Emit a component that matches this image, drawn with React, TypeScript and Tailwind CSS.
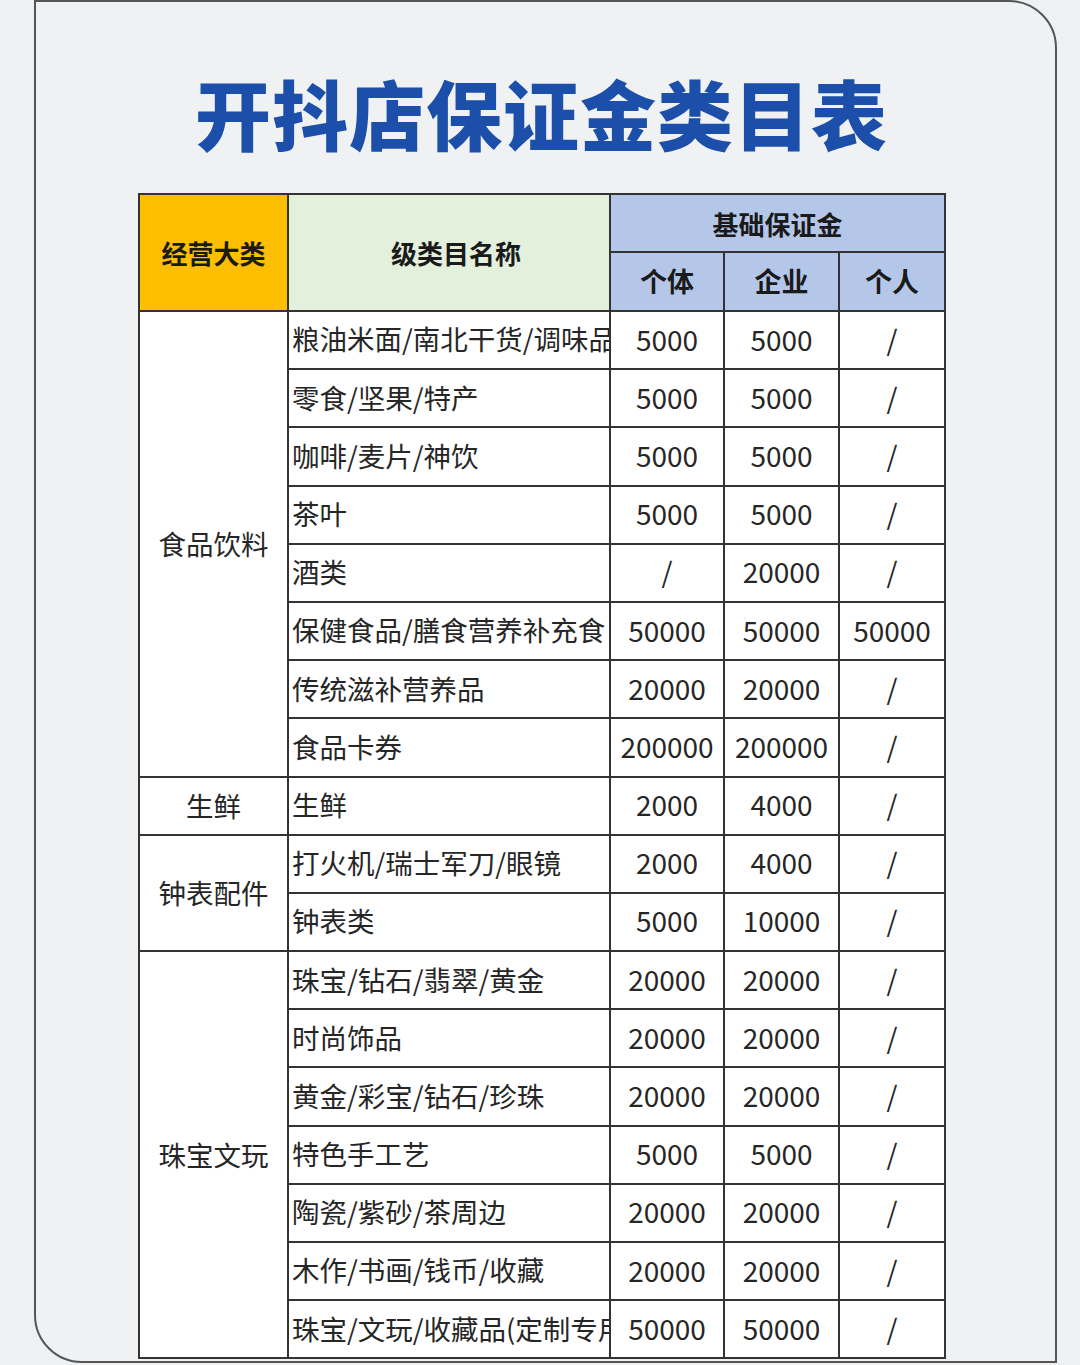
import React from "react";

type Row = { name: string; a: string; b: string; c: string };
type Group = { cat: string; rows: Row[] };

const groups: Group[] = [
  {
    cat: "食品饮料",
    rows: [
      { name: "粮油米面/南北干货/调味品", a: "5000", b: "5000", c: "/" },
      { name: "零食/坚果/特产", a: "5000", b: "5000", c: "/" },
      { name: "咖啡/麦片/神饮", a: "5000", b: "5000", c: "/" },
      { name: "茶叶", a: "5000", b: "5000", c: "/" },
      { name: "酒类", a: "/", b: "20000", c: "/" },
      { name: "保健食品/膳食营养补充食", a: "50000", b: "50000", c: "50000" },
      { name: "传统滋补营养品", a: "20000", b: "20000", c: "/" },
      { name: "食品卡券", a: "200000", b: "200000", c: "/" },
    ],
  },
  {
    cat: "生鲜",
    rows: [{ name: "生鲜", a: "2000", b: "4000", c: "/" }],
  },
  {
    cat: "钟表配件",
    rows: [
      { name: "打火机/瑞士军刀/眼镜", a: "2000", b: "4000", c: "/" },
      { name: "钟表类", a: "5000", b: "10000", c: "/" },
    ],
  },
  {
    cat: "珠宝文玩",
    rows: [
      { name: "珠宝/钻石/翡翠/黄金", a: "20000", b: "20000", c: "/" },
      { name: "时尚饰品", a: "20000", b: "20000", c: "/" },
      { name: "黄金/彩宝/钻石/珍珠", a: "20000", b: "20000", c: "/" },
      { name: "特色手工艺", a: "5000", b: "5000", c: "/" },
      { name: "陶瓷/紫砂/茶周边", a: "20000", b: "20000", c: "/" },
      { name: "木作/书画/钱币/收藏", a: "20000", b: "20000", c: "/" },
      { name: "珠宝/文玩/收藏品(定制专用)", a: "50000", b: "50000", c: "/" },
    ],
  },
];

const cell = "border-2 border-[#333333] p-0";
const num = `${cell} text-center text-[28px] pb-[3px]`;

export default function App() {
  return (
    <div
      className="w-[1080px] h-[1365px] bg-[#eef0f2] overflow-hidden pl-[34px]"
      style={{ fontFamily: '"Noto Sans CJK SC", "Noto Sans", sans-serif' }}
    >
      <div className="w-[1023px] h-[1363px] border-2 border-[#555555] rounded-tr-[48px] rounded-bl-[48px] bg-[#eff1f3] overflow-hidden">
        <div className="pt-[72px] h-[150px] flex justify-center pr-[8px]">
          <h1 className="text-[76px] leading-none font-black text-[#1b4fa9] tracking-[1px]">
            开抖店保证金类目表
          </h1>
        </div>
        <div className="mt-[41px] ml-[102px]">
          <table className="table-fixed border-collapse w-[806px] text-[#262626]">
            <colgroup>
              <col className="w-[149px]" />
              <col className="w-[322px]" />
              <col className="w-[114px]" />
              <col className="w-[115px]" />
              <col className="w-[106px]" />
            </colgroup>
            <thead>
              <tr className="h-[58px]">
                <th
                  rowSpan={2}
                  className={`${cell} bg-[#fdbf00] text-[26px] font-bold text-[#1a1a1a]`}
                >
                  经营大类
                </th>
                <th
                  rowSpan={2}
                  className={`${cell} bg-[#e3f0dc] text-[26px] font-bold text-[#1a1a1a] pl-[14px]`}
                >
                  级类目名称
                </th>
                <th
                  colSpan={3}
                  className={`${cell} bg-[#b5c7e8] text-[26px] font-bold text-[#1a1a1a]`}
                >
                  基础保证金
                </th>
              </tr>
              <tr className="h-[59px]">
                <th className={`${cell} bg-[#b5c7e8] text-[27px] font-bold text-[#1a1a1a]`}>个体</th>
                <th className={`${cell} bg-[#b5c7e8] text-[27px] font-bold text-[#1a1a1a]`}>企业</th>
                <th className={`${cell} bg-[#b5c7e8] text-[27px] font-bold text-[#1a1a1a]`}>个人</th>
              </tr>
            </thead>
            <tbody className="bg-white">
              {groups.map((g) =>
                g.rows.map((r, i) => (
                  <tr key={g.cat + r.name} className="h-[58.2px]">
                    {i === 0 && (
                      <td
                        rowSpan={g.rows.length}
                        className={`${cell} text-center text-[27.5px]`}
                      >
                        {g.cat}
                      </td>
                    )}
                    <td className={`${cell} text-[27.5px] pb-[2px]`}>
                      <div className="overflow-hidden whitespace-nowrap pl-[3px]">{r.name}</div>
                    </td>
                    <td className={num}>{r.a}</td>
                    <td className={num}>{r.b}</td>
                    <td className={num}>{r.c}</td>
                  </tr>
                ))
              )}
            </tbody>
          </table>
        </div>
      </div>
    </div>
  );
}
